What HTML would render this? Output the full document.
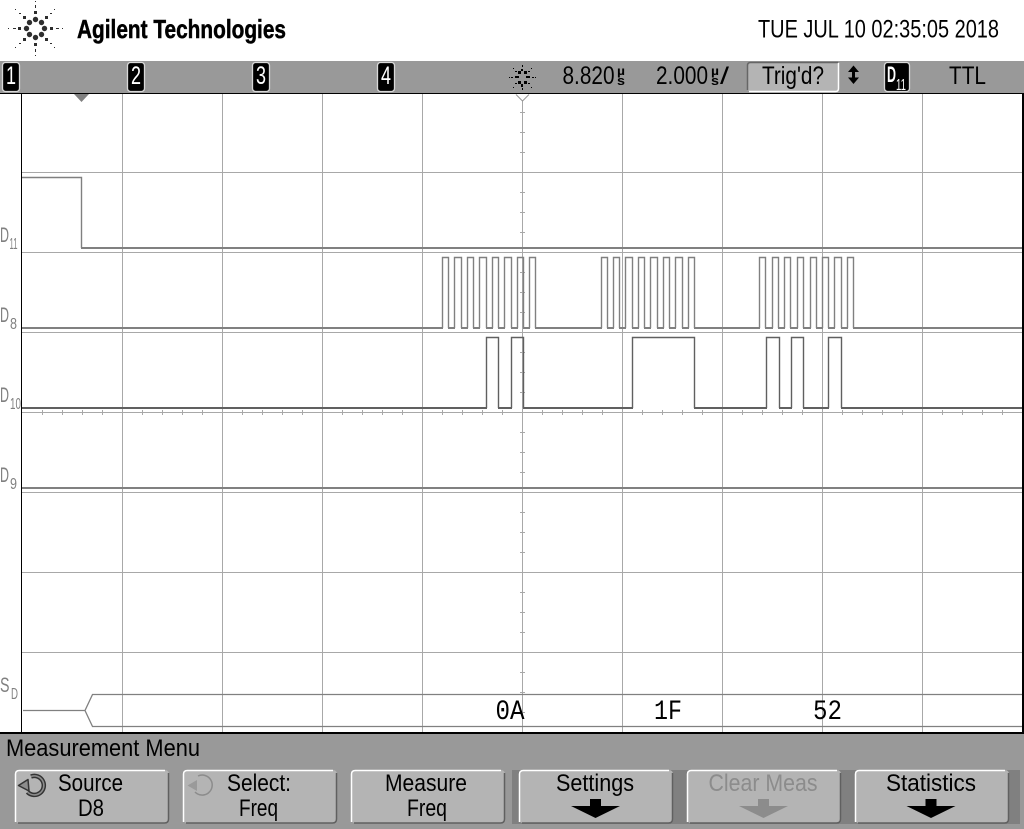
<!DOCTYPE html>
<html lang="en">
<head>
<meta charset="utf-8">
<title>Agilent Technologies Oscilloscope</title>
<style>
html,body{margin:0;padding:0;background:#fff;width:1024px;height:829px;overflow:hidden}
svg{display:block;position:absolute;left:0;top:0}
text{font-family:"Liberation Sans",sans-serif;fill:#000}
.c{shape-rendering:crispEdges}
.lab{fill:#808080}
</style>
</head>
<body>
<svg width="1024" height="829" viewBox="0 0 1024 829" xmlns="http://www.w3.org/2000/svg">
<rect width="1024" height="829" fill="#fff"/>

<!-- Logo -->
<g fill="#2e2e2e">
<circle cx="35.5" cy="19.5" r="2.7"/><circle cx="29.5" cy="22.5" r="2.7"/><circle cx="41.5" cy="22.5" r="2.7"/>
<circle cx="26.5" cy="28.5" r="2.7"/><circle cx="44.5" cy="28.5" r="2.7"/>
<circle cx="29.5" cy="34.5" r="2.7"/><circle cx="41.5" cy="34.5" r="2.7"/><circle cx="35.5" cy="37.5" r="2.7"/>
<g class="c">
<rect x="34" y="11" width="3" height="3"/><rect x="23" y="16" width="3" height="3"/><rect x="45" y="16" width="3" height="3"/>
<rect x="18" y="27" width="3" height="3"/><rect x="50" y="27" width="3" height="3"/>
<rect x="23" y="38" width="3" height="3"/><rect x="45" y="38" width="3" height="3"/><rect x="34" y="43" width="3" height="3"/>
<rect x="35" y="5" width="1" height="3"/><rect x="35" y="1" width="1" height="1"/>
<rect x="35" y="49" width="1" height="3"/><rect x="35" y="55" width="1" height="1"/>
<rect x="13" y="28" width="3" height="1"/><rect x="8" y="28" width="1" height="1"/>
<rect x="56" y="28" width="3" height="1"/><rect x="62" y="28" width="1" height="1"/>
<rect x="19" y="13" width="2" height="1"/><rect x="15" y="9" width="1" height="1"/>
<rect x="50" y="13" width="2" height="1"/><rect x="54" y="9" width="1" height="1"/>
<rect x="19" y="43" width="2" height="1"/><rect x="15" y="47" width="1" height="1"/>
<rect x="50" y="43" width="2" height="1"/><rect x="54" y="47" width="1" height="1"/>
</g>
</g>
<text x="77" y="38" font-size="26" font-weight="700" textLength="209" lengthAdjust="spacingAndGlyphs" stroke="#000" stroke-width=".5">Agilent Technologies</text>
<text x="758" y="37.5" font-size="25" textLength="241" lengthAdjust="spacingAndGlyphs">TUE JUL 10 02:35:05 2018</text>

<!-- Top status bar -->
<rect class="c" x="0" y="61" width="1024" height="32" fill="#999"/>
<rect class="c" x="0" y="93" width="1024" height="1" fill="#000"/>

<g id="chanboxes">
<rect x="2.5" y="62.5" width="17" height="29" rx="3" fill="#000" stroke="#d8d8d8" stroke-width="1.3"/>
<rect x="127.5" y="62.5" width="17" height="29" rx="3" fill="#000" stroke="#d8d8d8" stroke-width="1.3"/>
<rect x="252.5" y="62.5" width="17" height="29" rx="3" fill="#000" stroke="#d8d8d8" stroke-width="1.3"/>
<rect x="377.5" y="62.5" width="17" height="29" rx="3" fill="#000" stroke="#d8d8d8" stroke-width="1.3"/>
<text x="6" y="84" font-size="25" textLength="10" lengthAdjust="spacingAndGlyphs" style="fill:#fff">1</text>
<text x="131" y="84" font-size="25" textLength="10" lengthAdjust="spacingAndGlyphs" style="fill:#fff">2</text>
<text x="256" y="84" font-size="25" textLength="10" lengthAdjust="spacingAndGlyphs" style="fill:#fff">3</text>
<text x="381" y="84" font-size="25" textLength="10" lengthAdjust="spacingAndGlyphs" style="fill:#fff">4</text>
</g>

<!-- small sun -->
<g fill="#000" class="c">
<rect x="518" y="71" width="3" height="3"/><rect x="524" y="71" width="3" height="3"/>
<rect x="515" y="76" width="4" height="2"/><rect x="526" y="76" width="4" height="2"/>
<rect x="518" y="81" width="3" height="3"/><rect x="524" y="81" width="3" height="3"/>
<rect x="521" y="69" width="2" height="2"/><rect x="521" y="84" width="2" height="3"/>
<rect x="522" y="65" width="1" height="2"/><rect x="522" y="88" width="1" height="2"/>
<rect x="511" y="77" width="2" height="1"/><rect x="532" y="77" width="2" height="1"/>
<rect x="509" y="77" width="1" height="1"/><rect x="535" y="77" width="1" height="1"/>
<rect x="515" y="71" width="2" height="1"/><rect x="528" y="71" width="2" height="1"/>
<rect x="515" y="83" width="2" height="1"/><rect x="528" y="83" width="2" height="1"/>
<rect x="513" y="68" width="1" height="1"/><rect x="531" y="68" width="1" height="1"/>
<rect x="513" y="87" width="1" height="1"/><rect x="531" y="87" width="1" height="1"/>
</g>

<text x="562.5" y="84" font-size="25" textLength="52" lengthAdjust="spacingAndGlyphs">8.820</text>
<text x="617" y="75" font-size="12" textLength="8" lengthAdjust="spacingAndGlyphs" font-weight="700">µ</text>
<text x="617" y="85" font-size="13" textLength="8" lengthAdjust="spacingAndGlyphs" font-weight="700">s</text>
<text x="656" y="84" font-size="25" textLength="52" lengthAdjust="spacingAndGlyphs">2.000</text>
<text x="711" y="75" font-size="12" textLength="8" lengthAdjust="spacingAndGlyphs" font-weight="700">µ</text>
<text x="711" y="85" font-size="13" textLength="8" lengthAdjust="spacingAndGlyphs" font-weight="700">s</text>
<text x="720" y="84" font-size="24" textLength="9" lengthAdjust="spacingAndGlyphs">/</text>

<!-- Trig'd button -->
<rect x="747.5" y="62.5" width="91" height="29" rx="3" fill="#b4b4b4"/>
<path d="M747.5 90V65.5Q747.5 62.5 750.5 62.5H838" fill="none" stroke="#666" stroke-width="1.5"/>
<path d="M838.5 63V88.5Q838.5 91.5 835.5 91.5H749" fill="none" stroke="#fff" stroke-width="1.5"/>
<text x="762" y="84" font-size="25" textLength="62" lengthAdjust="spacingAndGlyphs">Trig'd?</text>

<!-- up/down arrow -->
<path d="M853.5 65.5L859 72H855V77.5H859L853.5 84L848 77.5H852V72H848Z" fill="#000"/>

<!-- D11 box -->
<rect x="884.5" y="62.5" width="25" height="29" rx="3" fill="#000" stroke="#d8d8d8" stroke-width="1.3"/>
<text x="887" y="82" font-size="22" font-weight="700" textLength="9" lengthAdjust="spacingAndGlyphs" style="fill:#fff">D</text>
<text x="896" y="90" font-size="16" textLength="10" lengthAdjust="spacingAndGlyphs" style="fill:#fff">11</text>
<text x="949" y="84" font-size="25" textLength="37" lengthAdjust="spacingAndGlyphs">TTL</text>

<!-- Grid -->
<g class="c" stroke="#a8a8a8" stroke-width="1" fill="none">
<path d="M122.5 94V732M222.5 94V732M322.5 94V732M422.5 94V732M522.5 100V732M622.5 94V732M722.5 94V732M822.5 94V732M922.5 94V732"/>
<path d="M22 172.5H1022M22 252.5H1022M22 332.5H1022M22 412.5H1022M22 492.5H1022M22 572.5H1022M22 652.5H1022"/>
<line x1="42" y1="412.5" x2="1022" y2="412.5" stroke-width="5" stroke-dasharray="1 19"/>
<line x1="522.5" y1="112" x2="522.5" y2="732" stroke-width="5" stroke-dasharray="1 19"/>
</g>

<!-- markers -->
<path d="M74 94H89L81.5 102Z" fill="#808080"/>
<path d="M516 94.5L522.5 101L529 94.5" fill="none" stroke="#999" stroke-width="1"/>

<!-- D11 trace -->
<g fill="none" stroke="#808080" stroke-width="1.4">
<path d="M22 177.5H81.5V248"/>
<path class="c" d="M81 248H1022" stroke-width="2"/>
</g>

<!-- D8 trace -->
<g fill="none" stroke="#808080" stroke-width="1.4">
<path d="M442.5 328V257.5H448.5V328M454.5 328V257.5H461.5V328M467.5 328V257.5H473.5V328M479.5 328V257.5H486.5V328M492.5 328V257.5H498.5V328M504.5 328V257.5H511.5V328M517.5 328V257.5H523.5V328M529.5 328V257.5H535.5V328"/>
<path d="M601.5 328V257.5H607.5V328M613.5 328V257.5H619.5V328M625.5 328V257.5H632.5V328M638.5 328V257.5H644.5V328M650.5 328V257.5H657.5V328M663.5 328V257.5H669.5V328M675.5 328V257.5H682.5V328M688.5 328V257.5H694.5V328"/>
<path d="M759.5 328V257.5H765.5V328M772.5 328V257.5H778.5V328M784.5 328V257.5H790.5V328M797.5 328V257.5H803.5V328M810.5 328V257.5H816.5V328M822.5 328V257.5H828.5V328M834.5 328V257.5H841.5V328M847.5 328V257.5H853.5V328"/>
<path class="c" stroke-width="2" d="M22 328H443M448 328H455M461 328H468M473 328H480M486 328H493M498 328H505M511 328H518M523 328H530M535 328H602M607 328H614M619 328H626M632 328H639M644 328H651M657 328H664M669 328H676M682 328H689M694 328H760M765 328H773M778 328H785M790 328H798M803 328H811M816 328H823M828 328H835M841 328H848M853 328H1022"/>
</g>

<!-- D10 trace -->
<g fill="none" stroke="#606060" stroke-width="1.4">
<path d="M486.5 408V337.5H498.5V408M511.5 408V337.5H523.5V408M632.5 408V337.5H694.5V408M766.5 408V337.5H779.5V408M791.5 408V337.5H803.5V408M828.5 408V337.5H841.5V408"/>
<path class="c" stroke-width="2" d="M22 408H487M498 408H512M523 408H633M694 408H767M779 408H792M803 408H829M841 408H1022"/>
</g>

<!-- D9 trace -->
<path class="c" d="M22 488H1022" stroke="#808080" stroke-width="2" fill="none"/>

<!-- serial bus -->
<path d="M23 710.5H85M1022 694.5H92.5L85 710.5L92.5 726.5H1022" fill="none" stroke="#808080" stroke-width="1.3"/>
<text x="495.5" y="719" font-size="28" textLength="29" lengthAdjust="spacingAndGlyphs" style="font-family:'Liberation Mono',monospace">0A</text>
<text x="654" y="719" font-size="28" textLength="28" lengthAdjust="spacingAndGlyphs" style="font-family:'Liberation Mono',monospace">1F</text>
<text x="813" y="719" font-size="28" textLength="29" lengthAdjust="spacingAndGlyphs" style="font-family:'Liberation Mono',monospace">52</text>

<!-- Frame axes -->
<rect class="c" x="21" y="94" width="1" height="638" fill="#000"/>
<rect class="c" x="1022" y="94" width="2" height="638" fill="#000"/>

<!-- Channel labels -->
<g class="lab">
<text class="lab" x="0" y="242" font-size="21" textLength="9" lengthAdjust="spacingAndGlyphs">D</text>
<text class="lab" x="9.5" y="249" font-size="16" textLength="8" lengthAdjust="spacingAndGlyphs">11</text>
<text class="lab" x="0" y="322" font-size="21" textLength="9" lengthAdjust="spacingAndGlyphs">D</text>
<text class="lab" x="10" y="329" font-size="16" textLength="7" lengthAdjust="spacingAndGlyphs">8</text>
<text class="lab" x="0" y="402" font-size="21" textLength="9" lengthAdjust="spacingAndGlyphs">D</text>
<text class="lab" x="10" y="409" font-size="16" textLength="11" lengthAdjust="spacingAndGlyphs">10</text>
<text class="lab" x="0" y="482" font-size="21" textLength="9" lengthAdjust="spacingAndGlyphs">D</text>
<text class="lab" x="10" y="489" font-size="16" textLength="7" lengthAdjust="spacingAndGlyphs">9</text>
<text class="lab" x="0" y="692" font-size="21" textLength="9.5" lengthAdjust="spacingAndGlyphs">S</text>
<text class="lab" x="11" y="699" font-size="16" textLength="7" lengthAdjust="spacingAndGlyphs">D</text>
</g>

<!-- Bottom menu -->
<rect class="c" x="0" y="732" width="1024" height="2" fill="#000"/>
<rect class="c" x="0" y="734" width="1024" height="95" fill="#999"/>
<rect class="c" x="512" y="770" width="508" height="54" fill="#808080"/>
<text x="6" y="756" font-size="24" textLength="194" lengthAdjust="spacingAndGlyphs">Measurement Menu</text>

<!-- Buttons -->
<g fill="#b4b4b4">
<rect x="15" y="770" width="154" height="53" rx="4"/>
<rect x="183" y="770" width="154" height="53" rx="4"/>
<rect x="351" y="770" width="154" height="53" rx="4"/>
<rect x="519" y="770" width="154" height="53" rx="4"/>
<rect x="687" y="770" width="154" height="53" rx="4"/>
<rect x="855" y="770" width="154" height="53" rx="4"/>
</g>
<g fill="none" stroke="#fff" stroke-width="1.5">
<path d="M15.5 822V774Q15.5 770.5 19.5 770.5H165"/>
<path d="M183.5 822V774Q183.5 770.5 187.5 770.5H333"/>
<path d="M351.5 822V774Q351.5 770.5 355.5 770.5H501"/>
<path d="M519.5 822V774Q519.5 770.5 523.5 770.5H669"/>
<path d="M687.5 822V774Q687.5 770.5 691.5 770.5H837"/>
<path d="M855.5 822V774Q855.5 770.5 859.5 770.5H1005"/>
</g>
<g fill="none" stroke="#606060" stroke-width="1.5">
<path d="M168.5 773V819Q168.5 823 164.5 823H18"/>
<path d="M336.5 773V819Q336.5 823 332.5 823H186"/>
<path d="M504.5 773V819Q504.5 823 500.5 823H354"/>
<path d="M672.5 773V819Q672.5 823 668.5 823H522"/>
<path d="M840.5 773V819Q840.5 823 836.5 823H690"/>
<path d="M1008.5 773V819Q1008.5 823 1004.5 823H858"/>
</g>

<!-- rotate icons -->
<path d="M31 776.5A9.5 9.5 0 1 1 27.5 792" fill="none" stroke="#333" stroke-width="4.5"/>
<path d="M31 776.5A9.5 9.5 0 1 1 27.5 792" fill="none" stroke="#8c8c8c" stroke-width="1.6"/>
<path d="M18.5 785.5L28 779.5L29 791Z" fill="#8c8c8c" stroke="#333" stroke-width="1.5" stroke-linejoin="round"/>
<path d="M198 776A10 10 0 1 1 195 792" fill="none" stroke="#8c8c8c" stroke-width="1.5"/>
<path d="M187.5 785.5L197 780V791Z" fill="#9a9a9a"/>

<!-- Button labels -->
<text x="58" y="791" font-size="24.5" textLength="65" lengthAdjust="spacingAndGlyphs">Source</text>
<text x="78" y="816" font-size="24.5" textLength="26" lengthAdjust="spacingAndGlyphs">D8</text>
<text x="227" y="791" font-size="24.5" textLength="64" lengthAdjust="spacingAndGlyphs">Select:</text>
<text x="239" y="816" font-size="24.5" textLength="39" lengthAdjust="spacingAndGlyphs">Freq</text>
<text x="385" y="791" font-size="24.5" textLength="82" lengthAdjust="spacingAndGlyphs">Measure</text>
<text x="407" y="816" font-size="24.5" textLength="40" lengthAdjust="spacingAndGlyphs">Freq</text>
<text x="556" y="791" font-size="24.5" textLength="78" lengthAdjust="spacingAndGlyphs">Settings</text>
<text x="708.5" y="791" font-size="24.5" textLength="109" lengthAdjust="spacingAndGlyphs" style="fill:#8c8c8c">Clear Meas</text>
<text x="886" y="791" font-size="24.5" textLength="90" lengthAdjust="spacingAndGlyphs">Statistics</text>

<!-- Down arrows -->
<path d="M590 799H601V806H620L595.5 818L571 806H590Z" fill="#000"/>
<path d="M758 799H769V806H788L763.5 818L739 806H758Z" fill="#8c8c8c"/>
<path d="M925.5 799H936.5V806H955.5L931 818L906.5 806H925.5Z" fill="#000"/>
</svg>
</body>
</html>
